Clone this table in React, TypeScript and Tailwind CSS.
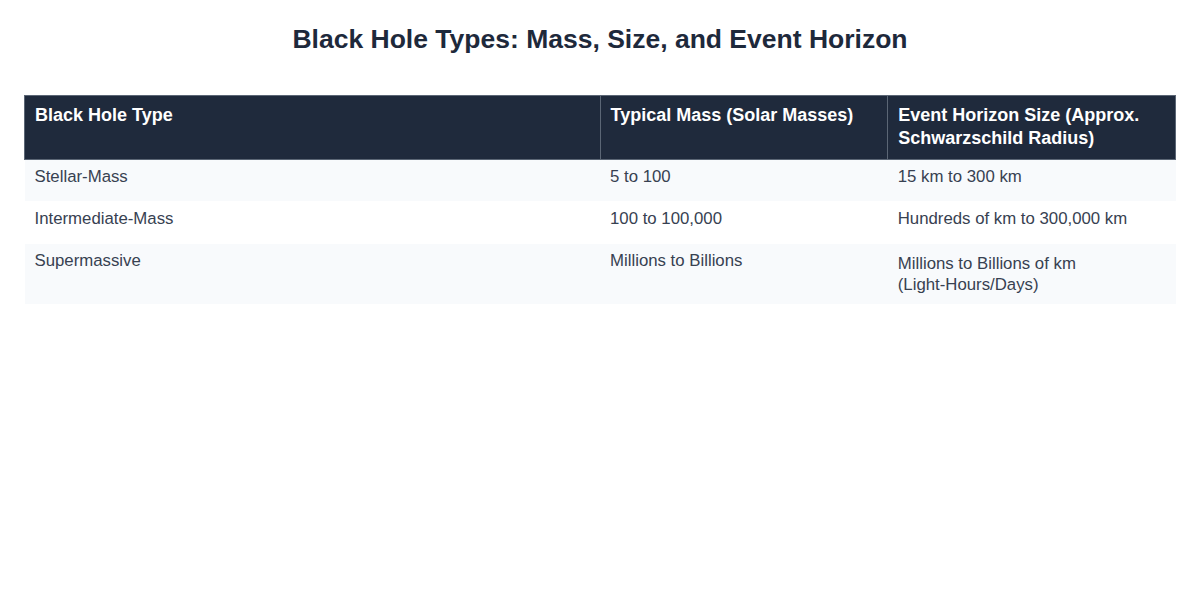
const rows: React.ReactNode[][] = [
  ['Stellar-Mass', '5 to 100', '15 km to 300 km'],
  ['Intermediate-Mass', '100 to 100,000', 'Hundreds of km to 300,000 km'],
  [
    'Supermassive',
    'Millions to Billions',
    <>
      Millions to Billions of km <span className="whitespace-nowrap">(Light-Hours/Days)</span>
    </>,
  ],
];

export default function App() {
  return (
    <div className="min-h-[600px] w-[1200px] bg-white px-6 pt-[23px] font-['Liberation_Sans',Arial,sans-serif]">
      <h1 className="text-center text-[26.5px] font-bold leading-[32px] text-[#1e293b]">
        Black Hole Types: Mass, Size, and Event Horizon
      </h1>
      <table className="mt-[40px] w-full table-fixed border-collapse">
        <thead>
          <tr className="bg-[#1f2a3c] text-white">
            <th className="w-1/2 border border-[#5b6675] px-2.5 pt-2 pb-[9px] text-left align-top text-[18px] font-bold leading-[23px]">
              Black Hole Type
            </th>
            <th className="w-1/4 border border-[#5b6675] border-l-[#3a4556] px-2.5 pt-2 pb-[9px] text-left align-top text-[18px] font-bold leading-[23px]">
              Typical Mass (Solar Masses)
            </th>
            <th className="w-1/4 border border-[#5b6675] border-l-[#3a4556] px-2.5 pt-2 pb-[9px] text-left align-top text-[18px] font-bold leading-[23px]">
              Event Horizon Size (Approx. Schwarzschild Radius)
            </th>
          </tr>
        </thead>
        <tbody>
          {rows.map((r, i) => (
            <tr key={i} className={i % 2 === 0 ? 'bg-[#f8fafc]' : 'bg-white'}>
              {r.map((c, j) => {
                let pad = 'pt-1.5 pb-[14px]';
                if (i === 1) pad = 'pt-[7px] pb-[15px]';
                if (i === 2 && j === 2) pad = 'pt-[9px] pb-[9px]';
                return (
                  <td
                    key={j}
                    className={`px-2.5 ${pad} align-top text-[16.8px] leading-[21px] text-[#374151]`}
                  >
                    {c}
                  </td>
                );
              })}
            </tr>
          ))}
        </tbody>
      </table>
    </div>
  );
}
